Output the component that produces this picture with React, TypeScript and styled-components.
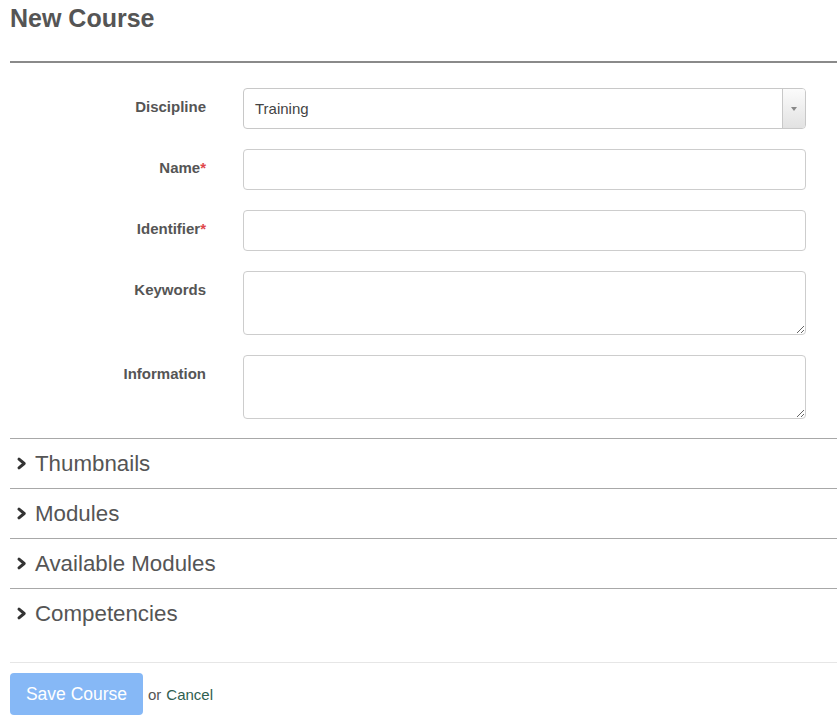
import React from 'react';
import styled, { createGlobalStyle } from 'styled-components';

const GlobalStyle = createGlobalStyle`
  body {
    margin: 0;
    background: #fff;
    font-family: "Liberation Sans", Arial, sans-serif;
    color: #555;
  }
  * {
    box-sizing: border-box;
  }
`;

const Page = styled.div`
  padding-left: 10px;
  width: 837px;
`;

const Title = styled.h1`
  margin: 0;
  padding-top: 4px;
  font-size: 25px;
  line-height: 28px;
  font-weight: bold;
  color: #555;
`;

const HeaderRule = styled.div`
  margin-top: 29px;
  height: 2px;
  background: #8a8a8a;
`;

const Form = styled.div`
  display: grid;
  grid-template-columns: 196px 563px;
  column-gap: 37px;
  row-gap: 20px;
  padding: 25px 0 19px;
`;

const Label = styled.label`
  text-align: right;
  font-size: 15px;
  font-weight: bold;
  color: #555;
  padding-top: 10px;
  line-height: 17px;
`;

const Required = styled.span`
  color: #e0474c;
`;

const SelectBox = styled.div`
  position: relative;
  height: 41px;
  border: 1px solid #c8c8c8;
  border-radius: 4px;
  display: flex;
  align-items: center;
  padding-left: 11px;
  font-size: 15px;
  color: #444;
`;

const SelectArrow = styled.div`
  position: absolute;
  top: 0;
  right: 0;
  bottom: 0;
  width: 23px;
  border-left: 1px solid #c8c8c8;
  border-radius: 0 3px 3px 0;
  background: linear-gradient(#fbfbfb, #e2e2e2);
  display: flex;
  align-items: center;
  justify-content: center;

  &::after {
    content: '';
    border-left: 3px solid transparent;
    border-right: 3px solid transparent;
    border-top: 4px solid #888;
  }
`;

const TextInput = styled.input`
  height: 41px;
  width: 100%;
  border: 1px solid #cdcdcd;
  border-radius: 4px;
  font: inherit;
  font-size: 15px;
  padding: 0 11px;
  outline: none;
`;

const TextArea = styled.textarea`
  height: 64px;
  width: 100%;
  border: 1px solid #cdcdcd;
  border-radius: 4px;
  font: inherit;
  font-size: 15px;
  padding: 8px 11px;
  resize: vertical;
  outline: none;
  display: block;
`;

const Section = styled.div`
  height: 50px;
  border-top: 1px solid #a8a8a8;
  display: flex;
  align-items: center;
  gap: 8px;
  padding-left: 6px;
  font-size: 22.3px;
  color: #555;
`;

const Chevron = styled.svg`
  width: 11px;
  height: 13px;
  flex-shrink: 0;
`;

const Footer = styled.div`
  margin-top: 24px;
  border-top: 1px solid #e6e6e6;
  padding-top: 10px;
  display: flex;
  align-items: center;
  gap: 5px;
  font-size: 15px;
`;

const SaveButton = styled.button`
  width: 133px;
  height: 42px;
  border: none;
  border-radius: 4px;
  background: #86b8f6;
  color: #fff;
  font: inherit;
  font-size: 17.5px;
  cursor: not-allowed;
`;

const Or = styled.span`
  color: #555;
`;

const CancelLink = styled.a`
  color: #2f5e50;
  text-decoration: none;
`;

const fields: { label: string; required?: boolean; kind: 'input' | 'area' }[] = [
  { label: 'Name', required: true, kind: 'input' },
  { label: 'Identifier', required: true, kind: 'input' },
  { label: 'Keywords', kind: 'area' },
  { label: 'Information', kind: 'area' },
];

const sections = ['Thumbnails', 'Modules', 'Available Modules', 'Competencies'];

export default function App() {
  return (
    <>
      <GlobalStyle />
      <Page>
        <Title>New Course</Title>
        <HeaderRule />
        <Form>
          <Label>Discipline</Label>
          <SelectBox>
            Training
            <SelectArrow />
          </SelectBox>
          {fields.map(f => (
            <React.Fragment key={f.label}>
              <Label>
                {f.label}
                {f.required && <Required>*</Required>}
              </Label>
              {f.kind === 'input' ? <TextInput type="text" /> : <TextArea />}
            </React.Fragment>
          ))}
        </Form>
        {sections.map(s => (
          <Section key={s}>
            <Chevron viewBox="0 0 11 13">
              <path d="M3 2.2 L8.2 6.5 L3 10.8" fill="none" stroke="#333" strokeWidth="3" strokeLinecap="round" strokeLinejoin="round" />
            </Chevron>
            {s}
          </Section>
        ))}
        <Footer>
          <SaveButton disabled>Save Course</SaveButton>
          <Or>or</Or>
          <CancelLink href="#">Cancel</CancelLink>
        </Footer>
      </Page>
    </>
  );
}
